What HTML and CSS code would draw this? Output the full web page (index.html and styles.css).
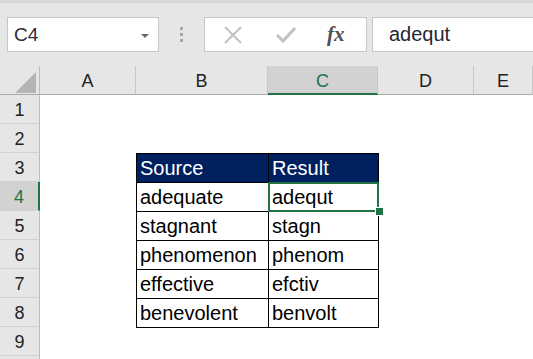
FILE: index.html
```html
<!doctype html>
<html lang="en">
<head>
    <meta charset="UTF-8">
    <title>Book1 - Excel</title>
    <link rel="stylesheet" href="styles.css">
</head>
<body>

<div class="bar">
    <div class="namebox">
        <span>C4</span>
        <i class="drop"></i>
    </div>
    <div class="grip"><i></i><i></i><i></i></div>
    <div class="fbtns">
        <svg class="ico" width="20" height="20" viewBox="0 0 20 20">
            <path d="M2 2 L18 18 M18 2 L2 18" stroke="#c2c2c2" stroke-width="2" fill="none"/>
        </svg>
        <svg class="ico" width="20" height="20" viewBox="0 0 20 20">
            <path d="M1 10 L7 16 L19 3" stroke="#c2c2c2" stroke-width="3" fill="none"/>
        </svg>
        <span class="fx">fx</span>
    </div>
    <div class="formula">adequt</div>
</div>

<div class="sheet">
    <!-- header row -->
    <div class="corner"><i></i></div>
    <div class="ch">A</div>
    <div class="ch">B</div>
    <div class="ch on">C</div>
    <div class="ch">D</div>
    <div class="ch">E</div>

    <div class="rh">1</div><div></div><div></div><div></div><div></div><div></div>
    <div class="rh">2</div><div></div><div></div><div></div><div></div><div></div>

    <div class="rh">3</div><div></div>
    <div class="c th">Source</div>
    <div class="c th r">Result</div>
    <div></div><div></div>

    <div class="rh on">4</div><div></div>
    <div class="c">adequate</div>
    <div class="c r active">adequt</div>
    <div></div><div></div>

    <div class="rh">5</div><div></div>
    <div class="c">stagnant</div>
    <div class="c r">stagn</div>
    <div></div><div></div>

    <div class="rh">6</div><div></div>
    <div class="c">phenomenon</div>
    <div class="c r">phenom</div>
    <div></div><div></div>

    <div class="rh">7</div><div></div>
    <div class="c">effective</div>
    <div class="c r">efctiv</div>
    <div></div><div></div>

    <div class="rh">8</div><div></div>
    <div class="c last">benevolent</div>
    <div class="c r last">benvolt</div>
    <div></div><div></div>

    <div class="rh">9</div><div></div><div></div><div></div><div></div><div></div>
    <!-- row 10 only peeks in at the bottom edge -->
    <div class="rh"></div><div></div><div></div><div></div><div></div><div></div>
</div>

</body>
</html>
```

FILE: styles.css
```css
body{
    margin: 0;
    width: 533px;
    height: 359px;
    overflow: hidden;
    font-family: "Liberation Sans", Arial, sans-serif;
    background-color: #fff;
}

/* formula bar */
.bar{
    height: 66px;
    box-sizing: border-box;
    display: flex;
    align-items: flex-start;
    background-color: #e6e6e6;
    border-top: 3px solid #d6d6d6;
    padding-top: 14px;
}
.namebox{
    margin-left: 7px;
    width: 152px;
    height: 35px;
    box-sizing: border-box;
    border: 1px solid #c6c6c6;
    background-color: #fff;
    display: flex;
    align-items: center;
    justify-content: space-between;
    padding: 0 9px 0 6px;
    font-size: 19px;
    color: #2b2b3a;
}
.drop{
    width: 0;
    height: 0;
    border-left: 4px solid transparent;
    border-right: 4px solid transparent;
    border-top: 4px solid #6a6a6a;
    margin-top: 2px;
}
.grip{
    width: 45px;
    height: 35px;
    display: flex;
    flex-direction: column;
    align-items: center;
    justify-content: center;
    gap: 3px;
}
.grip i{
    width: 3px;
    height: 3px;
    background-color: #a6a6a6;
}
.fbtns{
    width: 163px;
    height: 35px;
    box-sizing: border-box;
    border: 1px solid #c6c6c6;
    background-color: #fff;
    display: flex;
    align-items: center;
    padding-left: 18px;
    gap: 33px;
}
.ico{
    display: block;
}
.fx{
    font-family: "Liberation Serif", "DejaVu Serif", serif;
    font-style: italic;
    font-weight: bold;
    font-size: 21px;
    color: #505050;
    margin-left: -2px;
}
.formula{
    margin-left: 5px;
    flex: 1;
    height: 35px;
    box-sizing: border-box;
    border: 1px solid #c6c6c6;
    border-right: 0;
    background-color: #fff;
    padding-left: 16px;
    line-height: 33px;
    font-size: 20px;
    color: #262636;
}

/* grid */
.sheet{
    display: grid;
    grid-template-columns: 40px 96px 132px 110px 96px 1fr;
    grid-template-rows: repeat(11, 29px);
}
.sheet > div{
    box-sizing: border-box;
}
.corner{
    background-color: #e6e6e6;
    border-right: 1px solid #bdbdbd;
    border-bottom: 1px solid #ababab;
    position: relative;
}
.corner i{
    position: absolute;
    left: 15px;
    top: 6px;
    width: 0;
    height: 0;
    border-left: 21px solid transparent;
    border-bottom: 21px solid #b4b4b4;
}
.ch{
    background-color: #e6e6e6;
    border-right: 1px solid #c6c6c6;
    border-bottom: 1px solid #ababab;
    text-align: center;
    font-size: 18px;
    line-height: 30px;
    color: #222;
}
.ch.on{
    background-color: #d2d2d2;
    border-bottom: 2px solid #217346;
    color: #217346;
}
.rh{
    background-color: #e6e6e6;
    border-right: 1px solid #bdbdbd;
    border-bottom: 1px solid #d2d2d2;
    text-align: center;
    font-size: 18px;
    line-height: 30px;
    color: #222;
}
.rh.on{
    background-color: #d2d2d2;
    border-right: 2px solid #217346;
    color: #217346;
}

/* data table */
.c{
    border-left: 1px solid #000;
    border-top: 1px solid #000;
    font-size: 20px;
    line-height: 27px;
    padding: 1px 0 0 3px;
    color: #000;
    white-space: nowrap;
}
.c.r{
    box-shadow: 1px 0 0 #000;
}
.c.last{
    box-shadow: 0 1px 0 #000;
}
.c.r.last{
    box-shadow: 1px 0 0 #000, 0 1px 0 #000, 1px 1px 0 #000;
}
.th{
    background-color: #002060;
    color: #fff;
}
.active{
    position: relative;
}
.active::before{
    content: "";
    position: absolute;
    left: -1px;
    top: -1px;
    right: -1px;
    bottom: -1px;
    border: 2px solid #217346;
}
.active::after{
    content: "";
    position: absolute;
    right: -5px;
    bottom: -4px;
    width: 7px;
    height: 7px;
    background-color: #217346;
    box-shadow: 0 0 0 1px #fff;
}
```
